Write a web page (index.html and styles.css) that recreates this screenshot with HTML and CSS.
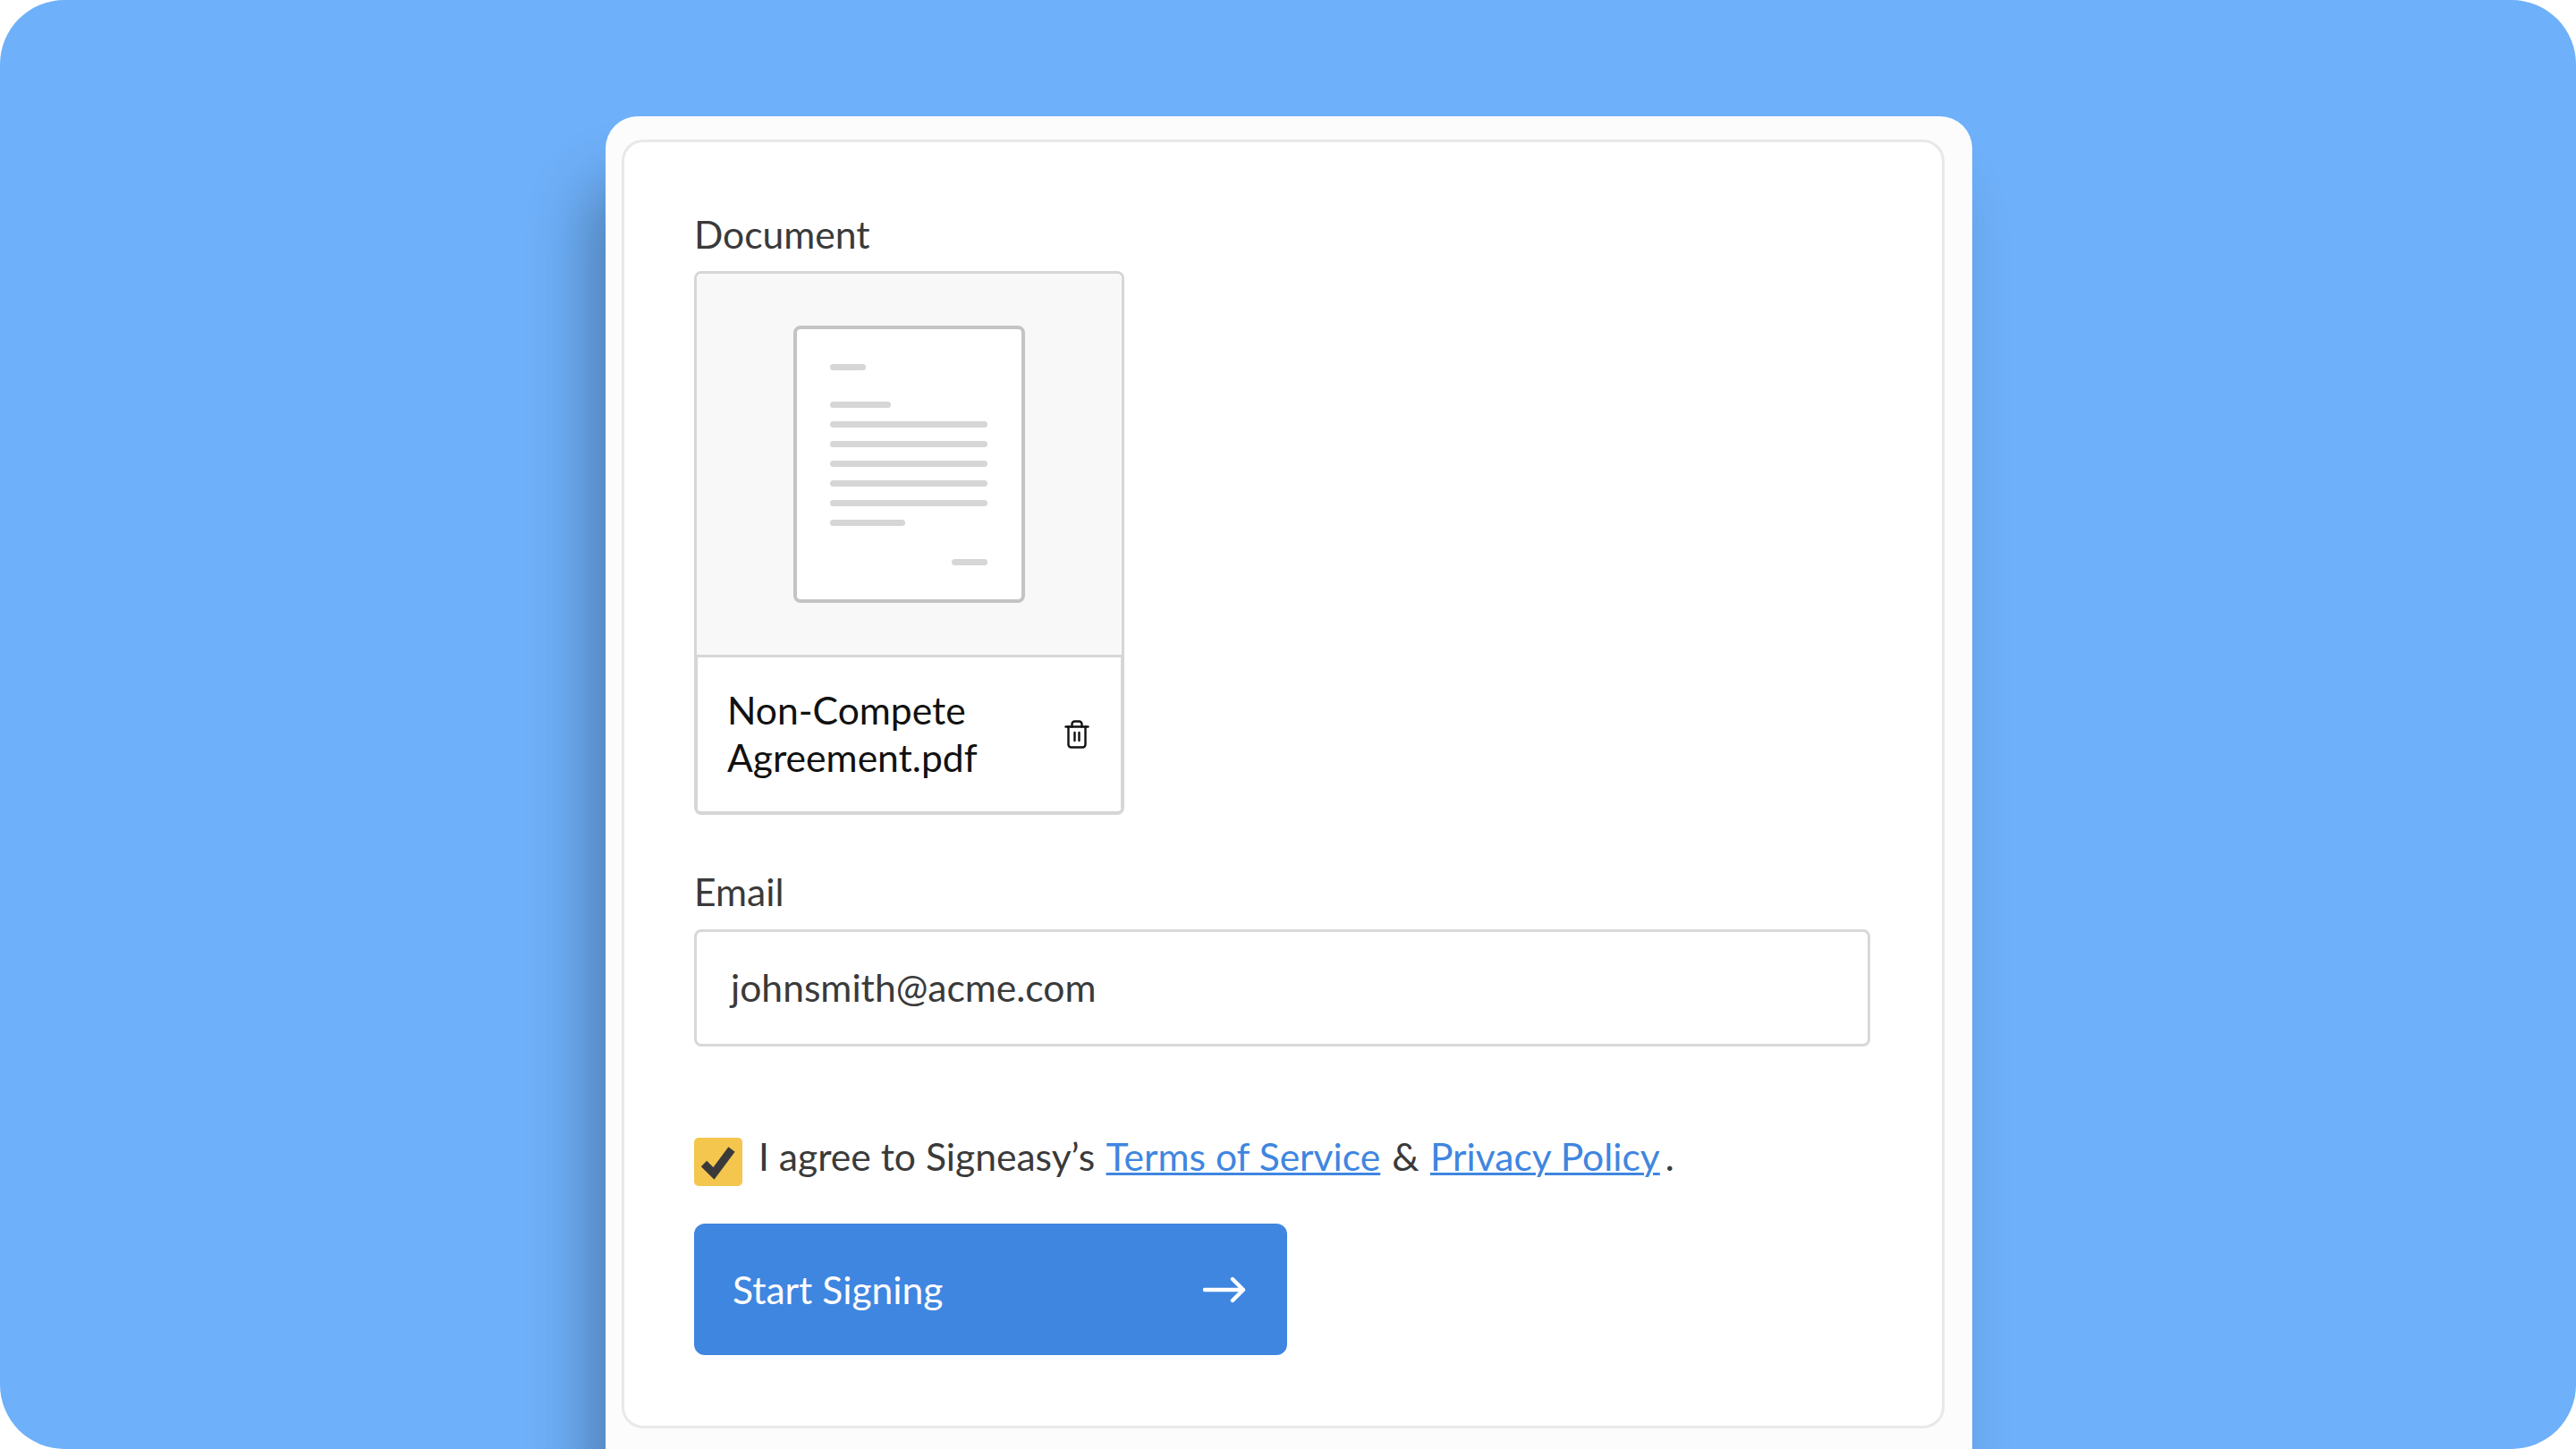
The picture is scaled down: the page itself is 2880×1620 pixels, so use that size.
FILE: index.html
```html
<!DOCTYPE html>
<html lang="en">
<head>
    <meta charset="UTF-8">
    <meta name="viewport" content="width=device-width, initial-scale=1.0">
    <title>Start Signing</title>
    <link rel="stylesheet" href="styles.css">
</head>
<body>
    <div class="stage">
        <div class="card">
            <form class="form-panel">
                <div class="field-label">Document</div>
                <div class="doc-box">
                    <div class="doc-preview">
                        <div class="doc-page">
                            <span class="doc-line w-short first"></span>
                            <span class="doc-line w-mid gap"></span>
                            <span class="doc-line w-full"></span>
                            <span class="doc-line w-full"></span>
                            <span class="doc-line w-full"></span>
                            <span class="doc-line w-full"></span>
                            <span class="doc-line w-full"></span>
                            <span class="doc-line w-long"></span>
                            <span class="doc-line w-sign"></span>
                        </div>
                    </div>
                    <div class="doc-info">
                        <div class="doc-name">Non-Compete<br>Agreement.pdf</div>
                        <svg class="trash-icon" viewBox="0 0 28 32" fill="none" stroke="#111" stroke-width="2.4" stroke-linecap="round" stroke-linejoin="round">
                            <path d="M1.5 7.5h25"/>
                            <path d="M8.5 7.5V4.5a3 3 0 0 1 3-3h5a3 3 0 0 1 3 3v3"/>
                            <path d="M4.5 7.5v20a3 3 0 0 0 3 3h13a3 3 0 0 0 3-3v-20"/>
                            <path d="M11.5 14v9M16.5 14v9"/>
                        </svg>
                    </div>
                </div>

                <div class="field-label email-label">Email</div>
                <div class="text-input">johnsmith@acme.com</div>

                <div class="agree-row">
                    <span class="checkbox">
                        <svg viewBox="0 0 54 54" width="54" height="54">
                            <path d="M11 29l11 11L42 13" fill="none" stroke="#3a3a3a" stroke-width="9"/>
                        </svg>
                    </span>
                    <span class="agree-text">I agree to Signeasy’s <a href="#">Terms of Service</a> &amp; <a href="#" class="last-link">Privacy Policy</a>.</span>
                </div>

                <button type="button" class="start-btn">
                    <span>Start Signing</span>
                    <svg width="48" height="30" viewBox="0 0 48 30" fill="none" stroke="#fff" stroke-width="4.4" stroke-linecap="round" stroke-linejoin="round">
                        <path d="M2 15h43M33 3l12 12-12 12"/>
                    </svg>
                </button>
            </form>
        </div>
    </div>
</body>
</html>
```
FILE: styles.css
```css
html, body {
    margin: 0;
    padding: 0;
    background-color: #fff;
}
body {
    font-family: "Lato", "Liberation Sans", sans-serif;
    color: #3a3a3a;
}
.stage {
    width: 2880px;
    height: 1620px;
    padding-top: 130px;
    box-sizing: border-box;
    background-color: #6eb0f9;
    border-radius: 72px;
    overflow: hidden;
}
.card {
    width: 1528px;
    height: 1560px;
    margin-left: 677px;
    padding: 26px 31px 0 18px;
    box-sizing: border-box;
    background-color: #fcfcfc;
    border-radius: 36px 36px 0 0;
    box-shadow: -24px 70px 70px -8px rgba(0, 0, 0, 0.3);
}
.form-panel {
    height: 1441px;
    padding: 76px 0 0 78px;
    box-sizing: border-box;
    background-color: #fff;
    border: 3px solid #e8e8e8;
    border-radius: 24px;
}
.field-label {
    font-size: 42.6px;
    line-height: 54px;
    color: #3a3a3a;
}
.doc-box {
    width: 481px;
    margin-top: 14px;
    box-sizing: border-box;
    border: 3px solid #d6d6d6;
    border-bottom-width: 4px;
    border-radius: 8px;
    overflow: hidden;
}
.doc-preview {
    height: 429px;
    padding-top: 58px;
    box-sizing: border-box;
    background-color: #f8f8f8;
    border-bottom: 3px solid #d6d6d6;
}
.doc-page {
    width: 259px;
    height: 310px;
    margin: 0 auto;
    padding: 39px 37px 0;
    box-sizing: border-box;
    background-color: #fff;
    border: 4px solid #c4c4c4;
    border-radius: 8px;
}
.doc-line {
    display: block;
    height: 7px;
    margin-top: 15px;
    background-color: #d6d6d6;
    border-radius: 4px;
}
.doc-line.first {
    margin-top: 0;
}
.doc-line.gap {
    margin-top: 35px;
}
.w-short { width: 40px; }
.w-mid { width: 68px; }
.w-full { width: 176px; }
.w-long { width: 84px; }
.w-sign {
    width: 40px;
    margin-top: 37px;
    margin-left: 136px;
}
.doc-info {
    display: flex;
    align-items: center;
    justify-content: space-between;
    height: 172px;
    padding: 0 35px 0 33px;
    box-sizing: border-box;
    border-left: 1px solid #d6d6d6;
    border-right: 1px solid #d6d6d6;
}
.doc-name {
    margin-top: -2px;
    font-size: 42.6px;
    line-height: 53px;
    color: #111;
}
.trash-icon {
    width: 28px;
    height: 32px;
}
.email-label {
    margin-top: 59px;
}
.text-input {
    width: 1315px;
    height: 131px;
    margin-top: 15px;
    padding-left: 38px;
    box-sizing: border-box;
    font-size: 42.6px;
    line-height: 123px;
    color: #3a3a3a;
    border: 3px solid #d8d8d8;
    border-radius: 8px;
}
.agree-row {
    display: flex;
    align-items: flex-start;
    gap: 18px;
    margin-top: 102px;
}
.checkbox {
    display: block;
    width: 54px;
    height: 54px;
    background-color: #f5c64e;
    border-radius: 5px;
}
.checkbox svg {
    display: block;
}
.agree-text {
    font-size: 42.6px;
    line-height: 42px;
    color: #3a3a3a;
}
.agree-text a {
    margin: 0 2px 0 1.5px;
    color: #3f86e0;
    text-decoration: underline;
    text-decoration-thickness: 3px;
}
.agree-text a.last-link {
    margin-right: 6px;
}
.start-btn {
    display: flex;
    align-items: center;
    justify-content: space-between;
    width: 663px;
    height: 147px;
    margin-top: 42px;
    padding: 0 46px 0 43px;
    font-family: inherit;
    font-size: 42.6px;
    color: #fff;
    background-color: #3f86e0;
    border: none;
    border-radius: 12px;
}
```
